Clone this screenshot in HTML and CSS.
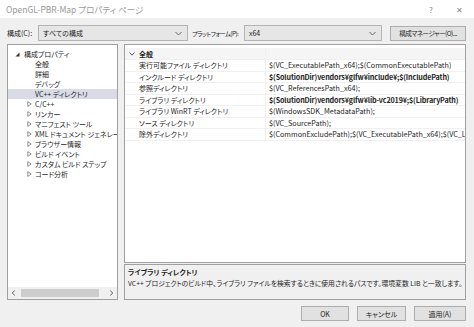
FILE: index.html
```html
<!DOCTYPE html>
<html lang="ja">
<head>
  <meta charset="UTF-8">
  <title>OpenGL-PBR-Map プロパティ ページ</title>
  <link rel="stylesheet" href="styles.css">
</head>
<body>

  <div class="window">
    <div class="titlebar">
      <span class="title">OpenGL-PBR-Map プロパティ ページ</span>
      <span class="help">?</span>
      <span class="close">✕</span>
    </div>

    <div class="content">
      <div class="toolbar">
        <span class="label label-config">構成(C):</span>
        <div class="combo combo-config">
          <span>すべての構成</span>
          <svg class="chev" width="7" height="5" viewBox="0 0 7 5"><path d="M0.5 1 L3.5 4 L6.5 1" fill="none" stroke="#555" stroke-width="0.9"/></svg>
        </div>
        <span class="label label-platform">プラットフォーム(P):</span>
        <div class="combo combo-platform">
          <span>x64</span>
          <svg class="chev" width="7" height="5" viewBox="0 0 7 5"><path d="M0.5 1 L3.5 4 L6.5 1" fill="none" stroke="#555" stroke-width="0.9"/></svg>
        </div>
        <div class="btn btn-manager">構成マネージャー(O)...</div>
      </div>

      <div class="main">
        <div class="tree">
          <ul class="tree-list">
            <li class="node root">
              <svg class="exp" width="5" height="5" viewBox="0 0 5 5"><path d="M4.5 0.5 L4.5 4.5 L0.5 4.5 Z" fill="#333"/></svg>
              構成プロパティ
            </li>
            <li class="node leaf">全般</li>
            <li class="node leaf">詳細</li>
            <li class="node leaf">デバッグ</li>
            <li class="node leaf selected">VC++ ディレクトリ</li>
            <li class="node branch"><svg class="col" width="5" height="6" viewBox="0 0 5 6"><path d="M0.8 0.6 L4.2 3 L0.8 5.4 Z" fill="none" stroke="#777" stroke-width="0.8"/></svg>C/C++</li>
            <li class="node branch"><svg class="col" width="5" height="6" viewBox="0 0 5 6"><path d="M0.8 0.6 L4.2 3 L0.8 5.4 Z" fill="none" stroke="#777" stroke-width="0.8"/></svg>リンカー</li>
            <li class="node branch"><svg class="col" width="5" height="6" viewBox="0 0 5 6"><path d="M0.8 0.6 L4.2 3 L0.8 5.4 Z" fill="none" stroke="#777" stroke-width="0.8"/></svg>マニフェスト ツール</li>
            <li class="node branch"><svg class="col" width="5" height="6" viewBox="0 0 5 6"><path d="M0.8 0.6 L4.2 3 L0.8 5.4 Z" fill="none" stroke="#777" stroke-width="0.8"/></svg>XML ドキュメント ジェネレーター</li>
            <li class="node branch"><svg class="col" width="5" height="6" viewBox="0 0 5 6"><path d="M0.8 0.6 L4.2 3 L0.8 5.4 Z" fill="none" stroke="#777" stroke-width="0.8"/></svg>ブラウザー情報</li>
            <li class="node branch"><svg class="col" width="5" height="6" viewBox="0 0 5 6"><path d="M0.8 0.6 L4.2 3 L0.8 5.4 Z" fill="none" stroke="#777" stroke-width="0.8"/></svg>ビルド イベント</li>
            <li class="node branch"><svg class="col" width="5" height="6" viewBox="0 0 5 6"><path d="M0.8 0.6 L4.2 3 L0.8 5.4 Z" fill="none" stroke="#777" stroke-width="0.8"/></svg>カスタム ビルド ステップ</li>
            <li class="node branch"><svg class="col" width="5" height="6" viewBox="0 0 5 6"><path d="M0.8 0.6 L4.2 3 L0.8 5.4 Z" fill="none" stroke="#777" stroke-width="0.8"/></svg>コード分析</li>
          </ul>
          <div class="hscroll">
            <svg class="arrow" width="5" height="6" viewBox="0 0 5 6"><path d="M3.8 0.6 L1.2 3 L3.8 5.4" fill="none" stroke="#606060" stroke-width="1"/></svg>
            <div class="thumb"></div>
            <svg class="arrow" width="5" height="6" viewBox="0 0 5 6"><path d="M1.2 0.6 L3.8 3 L1.2 5.4" fill="none" stroke="#606060" stroke-width="1"/></svg>
          </div>
        </div>

        <div class="right">
          <div class="grid">
            <div class="grid-row category">
              <span class="margin"><svg width="6" height="4" viewBox="0 0 6 4"><path d="M0.5 0.5 L3 3.2 L5.5 0.5" fill="none" stroke="#444" stroke-width="0.9"/></svg></span>
              <span class="name">全般</span>
            </div>
            <div class="grid-row">
              <span class="margin"></span>
              <span class="name">実行可能ファイル ディレクトリ</span>
              <span class="value">$(VC_ExecutablePath_x64);$(CommonExecutablePath)</span>
            </div>
            <div class="grid-row">
              <span class="margin"></span>
              <span class="name">インクルード ディレクトリ</span>
              <span class="value bold">$(SolutionDir)vendors¥glfw¥include¥;$(IncludePath)</span>
            </div>
            <div class="grid-row">
              <span class="margin"></span>
              <span class="name">参照ディレクトリ</span>
              <span class="value">$(VC_ReferencesPath_x64);</span>
            </div>
            <div class="grid-row">
              <span class="margin"></span>
              <span class="name">ライブラリ ディレクトリ</span>
              <span class="value bold">$(SolutionDir)vendors¥glfw¥lib-vc2019¥;$(LibraryPath)</span>
            </div>
            <div class="grid-row">
              <span class="margin"></span>
              <span class="name">ライブラリ WinRT ディレクトリ</span>
              <span class="value">$(WindowsSDK_MetadataPath);</span>
            </div>
            <div class="grid-row">
              <span class="margin"></span>
              <span class="name">ソース ディレクトリ</span>
              <span class="value">$(VC_SourcePath);</span>
            </div>
            <div class="grid-row">
              <span class="margin"></span>
              <span class="name">除外ディレクトリ</span>
              <span class="value">$(CommonExcludePath);$(VC_ExecutablePath_x64);$(VC_LibraryPath_x64)</span>
            </div>
          </div>
          <div class="desc">
            <div class="desc-title">ライブラリ ディレクトリ</div>
            <div class="desc-text">VC++ プロジェクトのビルド中、ライブラリ ファイルを検索するときに使用されるパスです。環境変数 LIB と一致します。</div>
          </div>
        </div>
      </div>

      <div class="actions">
        <div class="btn btn-ok">OK</div>
        <div class="btn btn-cancel">キャンセル</div>
        <div class="btn btn-apply">適用(A)</div>
      </div>
    </div>
  </div>

</body>
</html>
```

FILE: styles.css
```css
* {
  box-sizing: border-box;
}
body {
  margin: 0;
  width: 474px;
  height: 327px;
  overflow: hidden;
  background: #f0f0f0;
  font-family: "Noto Sans CJK JP", "Noto Sans", sans-serif;
  font-feature-settings: "palt";
  font-size: 7px;
  color: #1e1e1e;
}
svg {
  flex-shrink: 0;
}
.window {
  height: 327px;
  display: flex;
  flex-direction: column;
}
.titlebar {
  height: 18px;
  background: #ffffff;
  display: flex;
  align-items: center;
  padding: 0 0 0 6px;
  color: #9a9a9a;
  font-size: 8.5px;
}
.title {
  flex: 1;
}
.help {
  width: 10px;
  margin-right: 18px;
  text-align: center;
  color: #888;
  font-size: 8px;
}
.close {
  width: 10px;
  margin-right: 10px;
  text-align: center;
  color: #888;
  font-size: 8px;
}
.content {
  flex: 1;
  display: flex;
  flex-direction: column;
  padding: 7px 8px 0 7px;
}
.toolbar {
  display: flex;
  align-items: center;
  height: 16px;
}
.toolbar > * {
  flex-shrink: 0;
}
.label {
  white-space: nowrap;
}
.label-config {
  width: 31px;
}
.label-platform {
  width: 52px;
  margin-left: 4px;
  font-size: 6.2px;
  letter-spacing: -0.5px;
  overflow: hidden;
}
.combo {
  height: 16px;
  background: #e6e6e6;
  border: 1px solid #b4b4b4;
  display: flex;
  align-items: center;
  justify-content: space-between;
  padding: 0 5px 0 4px;
}
.combo-config {
  width: 150px;
}
.combo-platform {
  width: 138px;
}
.btn {
  height: 15px;
  background: #e1e1e1;
  border: 1px solid #adadad;
  display: flex;
  align-items: center;
  justify-content: center;
  white-space: nowrap;
  flex-shrink: 0;
}
.btn-manager {
  width: 76px;
  margin-left: 8px;
  font-size: 6.6px;
  letter-spacing: -0.5px;
}
.main {
  margin-top: 3px;
  height: 256px;
  display: flex;
  gap: 6px;
}
.tree {
  width: 111px;
  flex-shrink: 0;
  background: #ffffff;
  border: 1px solid #a0a0a0;
  display: flex;
  flex-direction: column;
  overflow: hidden;
}
.tree-list {
  list-style: none;
  margin: 0;
  padding: 4px 0 0 0;
  flex: 1;
}
.node {
  height: 10px;
  line-height: 10px;
  white-space: nowrap;
  display: flex;
  align-items: center;
}
.node.root {
  padding-left: 7px;
}
.node.root .exp {
  margin-right: 4px;
}
.node.leaf {
  padding-left: 27px;
}
.node.branch {
  padding-left: 19px;
}
.node.branch .col {
  margin-right: 3px;
}
.node.selected {
  background: #d9dbe6;
}
.hscroll {
  height: 12px;
  background: #f0f0f0;
  display: flex;
  align-items: center;
  padding: 0 3px;
  gap: 5px;
}
.thumb {
  flex: 1;
  height: 8px;
  background: #cdcdcd;
  margin-right: 5px;
}
.right {
  flex: 1;
  min-width: 0;
  display: flex;
  flex-direction: column;
  gap: 1px;
}
.grid {
  flex: 1;
  background: #ffffff;
  border: 1px solid #a0a0a0;
  overflow: hidden;
  padding-top: 3px;
}
.grid-row {
  height: 11.5px;
  display: flex;
  align-items: center;
  white-space: nowrap;
  border-bottom: 1px solid #f0f0f0;
}
.grid-row.category {
  height: 12px;
  background: #f5f5f5;
  font-weight: bold;
}
.margin {
  width: 14px;
  height: 100%;
  display: flex;
  align-items: center;
  justify-content: center;
  flex-shrink: 0;
}
.name {
  width: 127px;
  overflow: hidden;
  flex-shrink: 0;
  border-right: 1px solid #f0f0f0;
  height: 100%;
  display: flex;
  align-items: center;
}
.value {
  padding-left: 3px;
  font-size: 7.2px;
}
.value.bold {
  font-weight: bold;
  letter-spacing: -0.15px;
}
.desc {
  height: 36px;
  background: #f0f0f0;
  border: 1px solid #a0a0a0;
  padding: 2px 3px;
  overflow: hidden;
}
.desc-title {
  font-weight: bold;
  line-height: 11px;
}
.desc-text {
  line-height: 11px;
  white-space: nowrap;
  font-size: 6.8px;
}
.actions {
  margin-top: 6px;
  display: flex;
  justify-content: flex-end;
  gap: 8px;
}
.btn-ok {
  width: 48px;
}
.btn-cancel {
  width: 49px;
}
.btn-apply {
  width: 52px;
}
```
